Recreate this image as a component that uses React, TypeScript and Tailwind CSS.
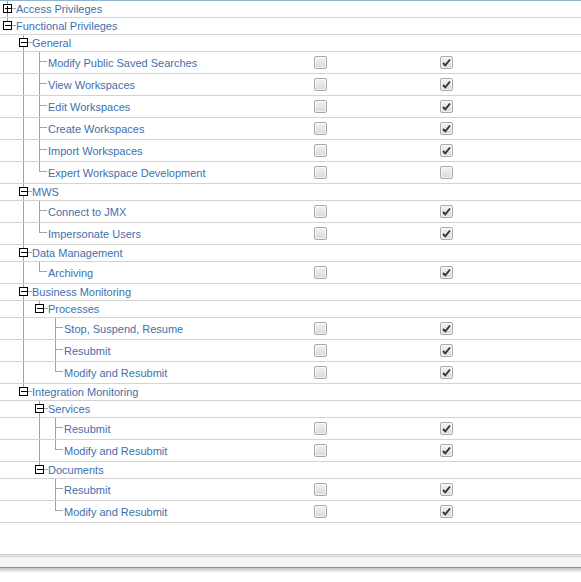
import React from "react";

type Node = {
    label: string;
    expanded?: boolean;
    children?: Node[];
    perms?: [boolean, boolean];
};

type Row = {
    node: Node;
    level: number;
    isLast: boolean;
    lines: boolean[];
};

const tree: Node[] = [
    { label: "Access Privileges", expanded: false, children: [] },
    {
        label: "Functional Privileges",
        expanded: true,
        children: [
            {
                label: "General",
                expanded: true,
                children: [
                    { label: "Modify Public Saved Searches", perms: [false, true] },
                    { label: "View Workspaces", perms: [false, true] },
                    { label: "Edit Workspaces", perms: [false, true] },
                    { label: "Create Workspaces", perms: [false, true] },
                    { label: "Import Workspaces", perms: [false, true] },
                    { label: "Expert Workspace Development", perms: [false, false] },
                ],
            },
            {
                label: "MWS",
                expanded: true,
                children: [
                    { label: "Connect to JMX", perms: [false, true] },
                    { label: "Impersonate Users", perms: [false, true] },
                ],
            },
            {
                label: "Data Management",
                expanded: true,
                children: [{ label: "Archiving", perms: [false, true] }],
            },
            {
                label: "Business Monitoring",
                expanded: true,
                children: [
                    {
                        label: "Processes",
                        expanded: true,
                        children: [
                            { label: "Stop, Suspend, Resume", perms: [false, true] },
                            { label: "Resubmit", perms: [false, true] },
                            { label: "Modify and Resubmit", perms: [false, true] },
                        ],
                    },
                ],
            },
            {
                label: "Integration Monitoring",
                expanded: true,
                children: [
                    {
                        label: "Services",
                        expanded: true,
                        children: [
                            { label: "Resubmit", perms: [false, true] },
                            { label: "Modify and Resubmit", perms: [false, true] },
                        ],
                    },
                    {
                        label: "Documents",
                        expanded: true,
                        children: [
                            { label: "Resubmit", perms: [false, true] },
                            { label: "Modify and Resubmit", perms: [false, true] },
                        ],
                    },
                ],
            },
        ],
    },
];

function flatten(nodes: Node[], level: number, lines: boolean[], out: Row[]) {
    nodes.forEach((node, i) => {
        const isLast = i === nodes.length - 1;
        out.push({ node, level, isLast, lines });
        if (node.children && node.expanded) {
            flatten(node.children, level + 1, [...lines, !isLast], out);
        }
    });
    return out;
}

const rows = flatten(tree, 0, [], []);

function Elbow({ row, height }: { row: Row; height: number }) {
    const width = (row.level + 1) * 16;
    const x0 = row.level * 16;
    const mid = Math.floor(height / 2) - 1 + 0.5;
    const isGroup = !row.node.perms;
    const stroke = "#a3a3a3";

    return (
        <svg width={width} height={height} className="shrink-0" shapeRendering="crispEdges">
            {row.lines.map((on, a) =>
                on ? (
                    <line key={a} x1={a * 16 + 7.5} y1={0} x2={a * 16 + 7.5} y2={height} stroke={stroke} />
                ) : null
            )}
            <line x1={x0 + 7.5} y1={0} x2={x0 + 7.5} y2={row.isLast ? mid : height} stroke={stroke} />
            {isGroup ? (
                <>
                    <line x1={x0 + 12} y1={mid} x2={x0 + 16} y2={mid} stroke={stroke} />
                    <rect x={x0 + 3.5} y={mid - 4} width={8} height={8} fill="#fff" stroke="#000" />
                    <line x1={x0 + 5} y1={mid} x2={x0 + 11} y2={mid} stroke="#000" />
                    {!row.node.expanded && (
                        <line x1={x0 + 7.5} y1={mid - 2.5} x2={x0 + 7.5} y2={mid + 3.5} stroke="#000" />
                    )}
                </>
            ) : (
                <line x1={x0 + 8} y1={mid} x2={x0 + 15} y2={mid} stroke={stroke} />
            )}
        </svg>
    );
}

function Checkbox({ checked }: { checked: boolean }) {
    return (
        <span className="flex h-[13px] w-[13px] items-center justify-center rounded-[2px] border border-[#a9a9a9] bg-linear-to-b from-[#f3f3f3] to-[#d9d9d9] shadow-[inset_0_0_0_1px_rgba(255,255,255,0.6)]">
            {checked && (
                <svg width="9" height="9" viewBox="0 0 9 9">
                    <path d="M1 5 L3.3 7.3 L8 1.5" fill="none" stroke="#333" strokeWidth="1.9" />
                </svg>
            )}
        </span>
    );
}

export default function App() {
    return (
        <div className="w-full bg-white text-[11px] text-[#4170ad]" style={{ fontFamily: '"Liberation Sans", Arial, sans-serif' }}>
            <div className="border-t border-[#8fb4d0]">
                {rows.map((row, i) => {
                    const isGroup = !row.node.perms;
                    const height = isGroup ? 16 : 21;
                    return (
                        <div key={i} className="grid grid-cols-[314px_126px_1fr] border-b border-[#d3d3d3]">
                            <div className="flex items-center">
                                <Elbow row={row} height={height} />
                                <span className="whitespace-nowrap leading-4">{row.node.label}</span>
                            </div>
                            {row.node.perms && (
                                <>
                                    <div className="flex items-center">
                                        <Checkbox checked={row.node.perms[0]} />
                                    </div>
                                    <div className="flex items-center">
                                        <Checkbox checked={row.node.perms[1]} />
                                    </div>
                                </>
                            )}
                        </div>
                    );
                })}
            </div>
            <div className="h-[31px]" />
            <div className="h-px bg-[#c8c8c8]" />
            <div className="h-px bg-[#ececec]" />
            <div className="h-px bg-[#d2d2d2]" />
            <div className="h-[10px] bg-[#f4f4f4]" />
            <div className="h-px bg-[#8e8e8e]" />
            <div className="h-[5px] bg-linear-to-b from-[#c4c4c4] to-white" />
        </div>
    );
}
